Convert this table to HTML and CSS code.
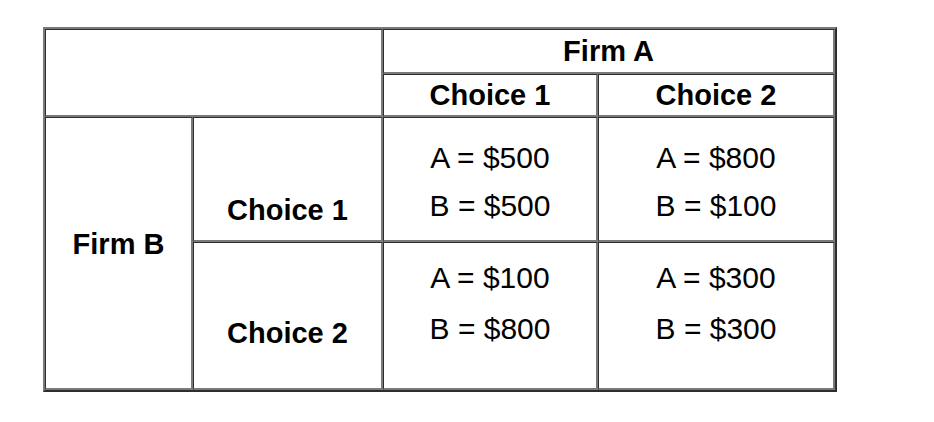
FILE: index.html
```html
<!DOCTYPE html>
<html>
<head>
<meta charset="utf-8">
<link rel="stylesheet" href="styles.css">
</head>
<body>
<table class="payoff">
  <colgroup>
    <col class="c1"><col class="c2"><col class="c3"><col class="c4">
  </colgroup>
  <tr class="r1">
    <td colspan="2" rowspan="2"></td>
    <td colspan="2" class="head">Firm A</td>
  </tr>
  <tr class="r2">
    <td class="head">Choice 1</td>
    <td class="head">Choice 2</td>
  </tr>
  <tr class="r3">
    <td rowspan="2" class="head firm-b">Firm B</td>
    <td class="head lab3">Choice 1</td>
    <td class="val val3"><div>A = $500</div><div>B = $500</div></td>
    <td class="val val3"><div>A = $800</div><div>B = $100</div></td>
  </tr>
  <tr class="r4">
    <td class="head lab4">Choice 2</td>
    <td class="val val4"><div>A = $100</div><div>B = $800</div></td>
    <td class="val val4"><div>A = $300</div><div>B = $300</div></td>
  </tr>
</table>
</body>
</html>
```
FILE: styles.css
```css
html, body {
  margin: 0;
  background: #ffffff;
}
body {
  padding: 27px 0 0 43px;
  font-family: "Liberation Sans", Arial, sans-serif;
  color: #000;
}
.payoff {
  table-layout: fixed;
  width: 794px;
  border-collapse: separate;
  border-spacing: 0;
  border-style: solid;
  border-width: 2px;
  border-color: #7a7a7a #2e2e2e #2e2e2e #7a7a7a;
  font-size: 30px;
}
.c1 { width: 148px; }
.c2 { width: 190px; }
.c3 { width: 215px; }
.c4 { width: 237px; }
.payoff td {
  padding: 0;
  text-align: center;
  vertical-align: middle;
  border-style: solid;
  border-width: 1px 2px 2px 1px;
  border-color: #2e2e2e #7a7a7a #7a7a7a #2e2e2e;
}
.r1 { height: 45px; }
.r2 { height: 43px; }
.r3 { height: 125px; }
.r4 { height: 148px; }
.head { font-weight: bold; font-size: 29px; }
.firm-b { padding-bottom: 18px !important; }
.lab3 { padding-top: 63px !important; }
.lab4 { padding-top: 36px !important; }
.val3 div { line-height: 48px; }
.val4 div { line-height: 51px; }
.val3 { padding-top: 5px !important; }
.val4 { padding-bottom: 26px !important; }
```
